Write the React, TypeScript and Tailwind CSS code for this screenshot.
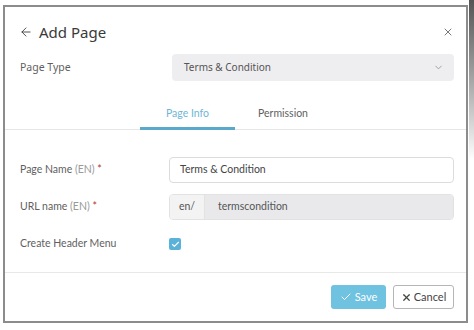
import { ArrowLeft, X, ChevronDown, Check } from 'lucide-react';

function FormRow({ label, children }: { label: React.ReactNode; children: React.ReactNode }) {
  return (
    <div className="flex items-center h-[26px]">
      <div className="w-[149px] shrink-0 text-[10.5px] text-[#5f5f5f]">{label}</div>
      <div className="flex-1">{children}</div>
    </div>
  );
}

function Required({ text }: { text: string }) {
  return (
    <span>
      {text} <span className="text-[#9a9a9a]">(EN)</span> <span className="text-[#b03a2e]">*</span>
    </span>
  );
}

export default function App() {
  return (
    <div className="w-[474px] h-[330px] bg-white flex" style={{ fontFamily: 'Lato, "Noto Sans", sans-serif' }}>
      {/* Dialog */}
      <div className="ml-[3px] mt-[5px] w-[465px] h-[318px] border-2 border-[#8c8c8c] bg-white flex flex-col">
        {/* Header */}
        <div className="flex items-center justify-between pt-[13px] pl-[14px] pr-[12px] h-[37px]">
          <div className="flex items-center gap-[6px] text-[#3a3a3a]">
            <ArrowLeft size={14} strokeWidth={1.5} />
            <span className="text-[15px] leading-[24px]" style={{ fontFamily: '"Noto Sans", sans-serif' }}>Add Page</span>
          </div>
          <X size={12} strokeWidth={1.6} className="text-[#555]" />
        </div>

        {/* Page type */}
        <div className="flex items-center mt-[10px] pl-[15px] pr-[12px]">
          <div className="w-[152px] shrink-0 text-[10.5px] text-[#5f5f5f]" style={{ fontFamily: '"Noto Sans", sans-serif' }}>Page Type</div>
          <div className="flex-1 h-[27px] rounded-[4px] bg-[#eeeef0] flex items-center justify-between pl-[12px] pr-[10px]">
            <span className="text-[10px] text-[#555]" style={{ fontFamily: '"Noto Sans", sans-serif' }}>Terms &amp; Condition</span>
            <ChevronDown size={11} strokeWidth={1.6} className="text-[#888]" />
          </div>
        </div>

        {/* Tabs */}
        <div className="mt-[23px] flex justify-center border-b border-[#e6e6e6]">
          <div className="w-[95px] text-center text-[10.5px] leading-[18px] pb-[5px] border-b-[3px] border-[#5aa9ca] text-[#6fb6d6] -mb-px">Page Info</div>
          <div className="w-[96px] text-center text-[10.5px] leading-[18px] pb-[5px] border-b-[3px] border-transparent text-[#5f5f5f] -mb-px">Permission</div>
        </div>

        {/* Form */}
        <div className="mt-[27px] pl-[15px] pr-[12px] flex flex-col gap-[11px]">
          <FormRow label={<Required text="Page Name" />}>
            <div className="h-[26px] rounded-[4px] border border-[#dcdcdc] bg-white flex items-center pl-[10px] text-[10.5px] text-[#444]">
              Terms &amp; Condition
            </div>
          </FormRow>
          <FormRow label={<Required text="URL name" />}>
            <div className="h-[26px] rounded-[4px] border border-[#e2e2e2] flex overflow-hidden text-[10.5px] text-[#555]">
              <div className="w-[35px] flex items-center justify-center bg-[#f3f3f4] border-r border-[#e2e2e2]">en/</div>
              <div className="flex-1 bg-[#e9e9ec] flex items-center pl-[13px]">termscondition</div>
            </div>
          </FormRow>
          <FormRow label="Create Header Menu">
            <div className="w-[12px] h-[12px] rounded-[2px] bg-[#5ab2d8] flex items-center justify-center">
              <Check size={9} strokeWidth={3} className="text-white" />
            </div>
          </FormRow>
        </div>

        {/* Footer */}
        <div className="mt-[15px] border-t border-[#e8e8e8] flex justify-end gap-[7px] pt-[12px] pr-[12px]">
          <div className="w-[55px] h-[24px] rounded-[3px] bg-[#6fc2e0] flex items-center justify-center gap-[3px] text-white text-[11px]">
            <Check size={12} strokeWidth={2} />
            <span>Save</span>
          </div>
          <div className="w-[61px] h-[24px] rounded-[3px] border border-[#b5b5b5] bg-white flex items-center justify-center gap-[2px] text-[#444] text-[11px]">
            <X size={11} strokeWidth={2.6} />
            <span>Cancel</span>
          </div>
        </div>
      </div>
      <div className="ml-[1px] w-[5px] h-[160px] bg-gradient-to-b from-[#555] to-white" />
    </div>
  );
}
